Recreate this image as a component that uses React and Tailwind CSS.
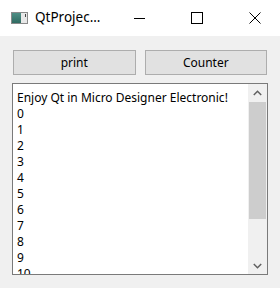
import React from "react";

const font = { fontFamily: '"Noto Sans", "Liberation Sans", Arial, sans-serif' };

export default function App() {
  const lines = ["Enjoy Qt in Micro Designer Electronic!", "0", "1", "2", "3", "4", "5", "6", "7", "8", "9", "10"];
  return (
    <div className="w-[280px] h-[288px] bg-[#f0f0f0] flex flex-col overflow-hidden" style={font}>
      {/* title bar */}
      <div className="h-[36px] bg-white flex items-center shrink-0">
        <div className="ml-[11px] w-[17px] h-[12px] border border-[#8a8a8a] flex bg-[#e8e8e8]">
          <div className="w-[9px] h-full bg-gradient-to-b from-[#4f8f86] to-[#2f6b62]" />
          <div className="flex-1 flex justify-end pt-[1px] pr-[1px]">
            <div className="w-[1px] h-[3px] bg-[#444]" />
          </div>
        </div>
        <div className="ml-[7px] text-[13.5px] text-black leading-none">QtProjec...</div>
        <div className="flex-1" />
        <div className="w-[46px] h-[36px] flex items-center justify-center">
          <div className="w-[11px] h-[1px] bg-black" />
        </div>
        <div className="w-[46px] h-[36px] flex items-center justify-center ml-[12px]">
          <div className="w-[12px] h-[12px] border border-black" />
        </div>
        <div className="w-[46px] h-[36px] flex items-center justify-center ml-[12px]">
          <svg width="12" height="12" viewBox="0 0 12 12">
            <path d="M0.5 0.5 L11.5 11.5 M11.5 0.5 L0.5 11.5" stroke="#000" strokeWidth="1" />
          </svg>
        </div>
        <div className="w-[2px]" />
      </div>

      {/* body */}
      <div className="flex-1 flex flex-col px-[12px] pt-[14px]">
        <div className="grid grid-cols-2 gap-[9px] px-[1px]">
          <button className="h-[25px] bg-[#e1e1e1] border border-[#adadad] text-[12px] text-black">print</button>
          <button className="h-[25px] bg-[#e1e1e1] border border-[#adadad] text-[12px] text-black">Counter</button>
        </div>
        <div className="mt-[8px] h-[192px] border border-[#7a7a7a] bg-white flex overflow-hidden">
          <div className="flex-1 overflow-hidden pl-[4px] pt-[6px] text-[12px] leading-[16px] text-black whitespace-nowrap">
            {lines.map((l, i) => (
              <div key={i}>{l}</div>
            ))}
          </div>
          <div className="w-[19px] bg-[#f0f0f0] flex flex-col shrink-0">
            <div className="h-[18px] flex items-center justify-center">
              <svg width="9" height="6" viewBox="0 0 9 6">
                <path d="M0.8 5 L4.5 1.3 L8.2 5" fill="none" stroke="#606060" strokeWidth="1.5" />
              </svg>
            </div>
            <div className="h-[117px] bg-[#cdcdcd] mx-[1px]" />
            <div className="flex-1" />
            <div className="h-[17px] flex items-center justify-center">
              <svg width="9" height="6" viewBox="0 0 9 6">
                <path d="M0.8 1 L4.5 4.7 L8.2 1" fill="none" stroke="#606060" strokeWidth="1.5" />
              </svg>
            </div>
          </div>
        </div>
      </div>
    </div>
  );
}
